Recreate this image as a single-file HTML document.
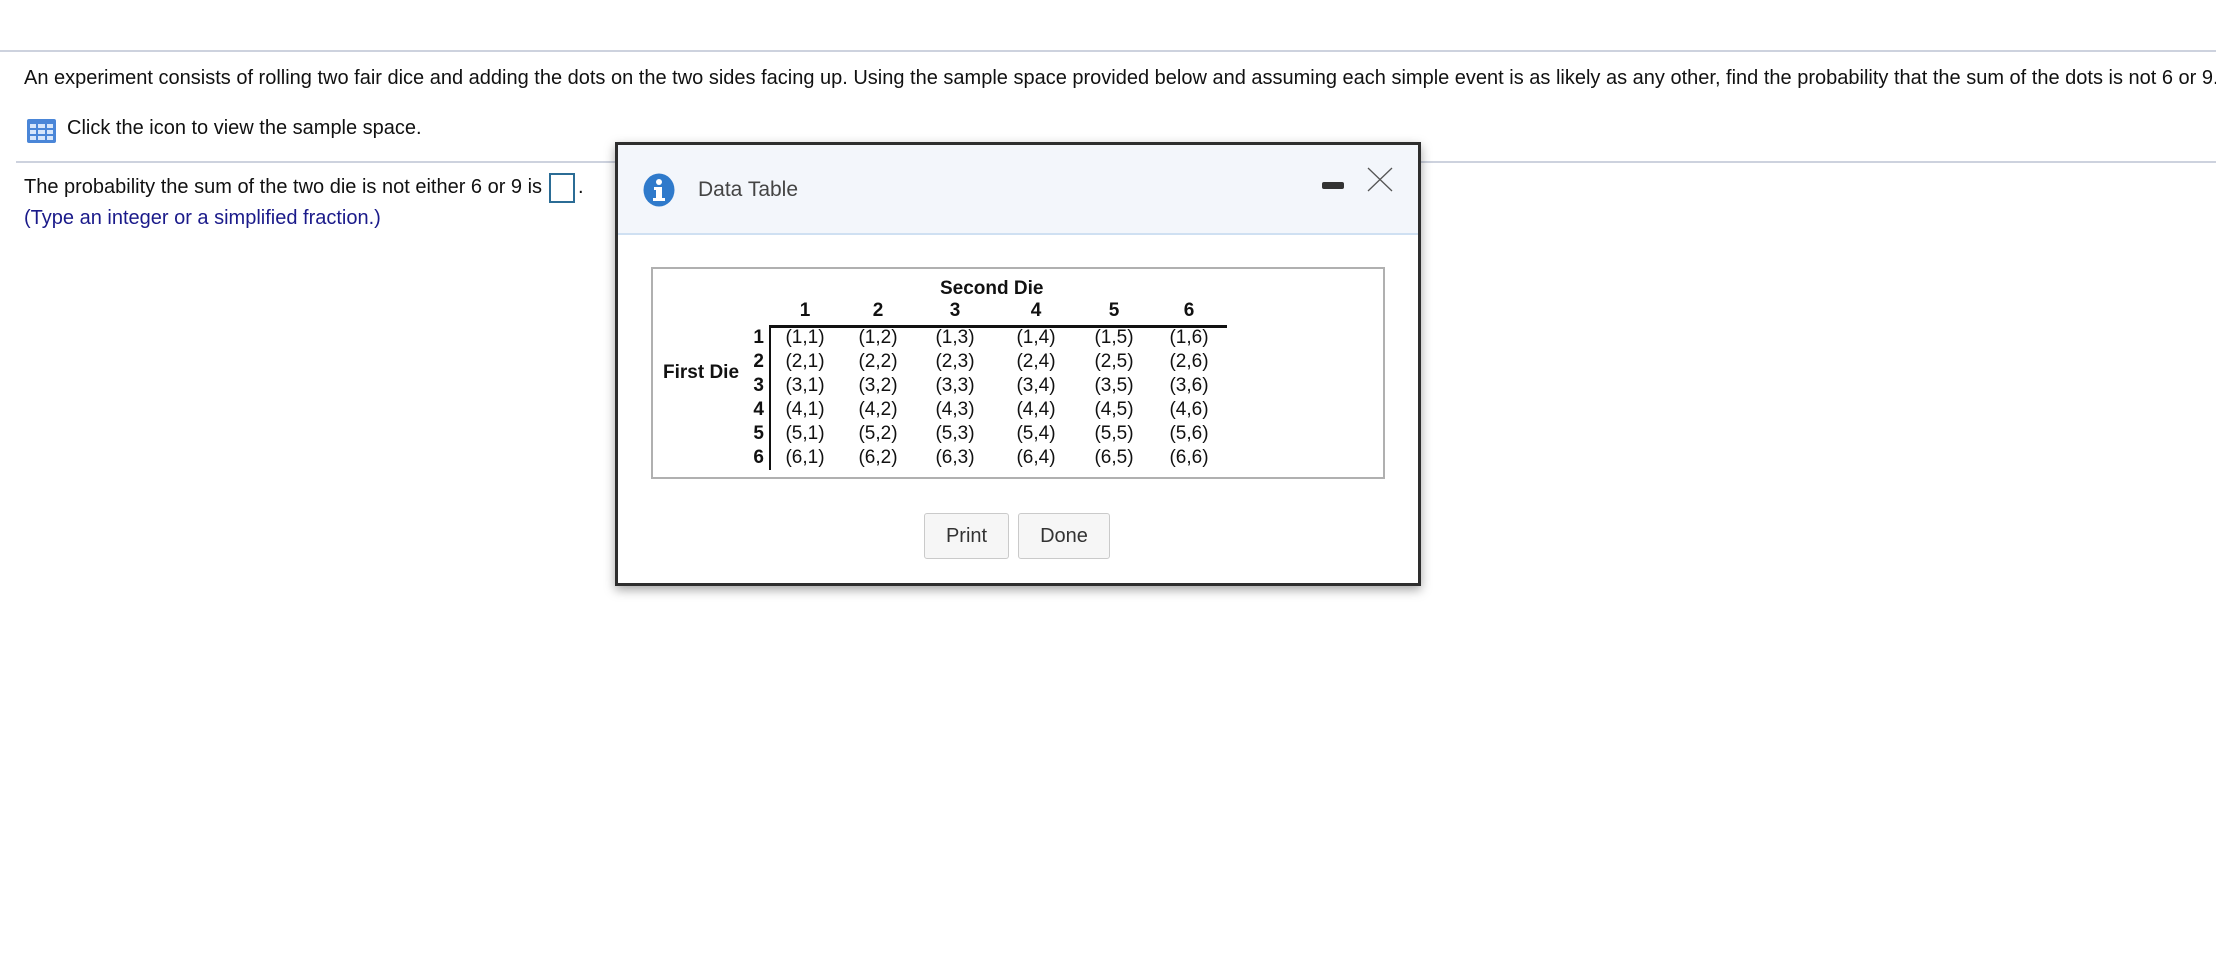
<!DOCTYPE html>
<html><head><meta charset="utf-8"><style>
*{margin:0;padding:0;box-sizing:border-box}
body{width:2216px;height:962px;background:#fff;position:relative;overflow:hidden;font-family:"Liberation Sans",Arial,sans-serif;color:#111}
.a{position:absolute;white-space:nowrap}
.hl{position:absolute;height:2px;background:#cdd2de}
.t{font-size:20px;line-height:24px}
.modal{position:absolute;left:615px;top:142px;width:806px;height:444px;border:3px solid #2e2e2e;background:#fff;box-shadow:0 4px 10px rgba(0,0,0,.35)}
.hdr{position:absolute;left:0;top:0;right:0;height:90px;background:#f3f6fb;border-bottom:2px solid #cfe0f2}
.cell{position:absolute;width:80px;text-align:center;font-size:19px;line-height:22px;transform:translateX(-40px)}
.b{font-weight:bold}
.btn{position:absolute;top:368px;height:46px;background:#f6f6f6;border:1px solid #cacaca;border-radius:3px;font-size:20px;line-height:44px;text-align:center;color:#333}
</style></head><body>
<div class="hl" style="left:0;top:50px;width:2216px"></div>
<div class="a t" style="left:24px;top:66px">An experiment consists of rolling two fair dice and adding the dots on the two sides facing up. Using the sample space provided below and assuming each simple event is as likely as any other, find the probability that the sum of the dots is not 6 or 9.</div>
<svg class="a" style="left:27px;top:119px" width="29" height="24" viewBox="0 0 29 24"><rect x="0" y="0" width="29" height="24" rx="2" fill="#4a86d8"/><g fill="#d6e6fb"><rect x="3" y="5" width="6" height="4"/><rect x="11" y="5" width="7" height="4"/><rect x="20" y="5" width="6" height="4"/><rect x="3" y="11" width="6" height="4"/><rect x="11" y="11" width="7" height="4"/><rect x="20" y="11" width="6" height="4"/><rect x="3" y="17" width="6" height="4"/><rect x="11" y="17" width="7" height="4"/><rect x="20" y="17" width="6" height="4"/></g></svg>
<div class="a t" style="left:67px;top:116px">Click the icon to view the sample space.</div>
<div class="hl" style="left:16px;top:161px;width:2200px"></div>
<div class="a t" style="left:24px;top:175px">The probability the sum of the two die is not either 6 or 9 is</div>
<div class="a" style="left:549px;top:173px;width:26px;height:30px;border:2px solid #2b6c95"></div>
<div class="a t" style="left:578px;top:175px">.</div>
<div class="a t" style="left:24px;top:206px;color:#1a1a8a">(Type an integer or a simplified fraction.)</div>

<div class="modal">
<div class="hdr"></div>
<svg class="a" style="left:25px;top:28px" width="32" height="34" viewBox="0 0 32 34"><ellipse cx="16" cy="17" rx="15.5" ry="16.5" fill="#2f7acb"/><circle cx="16" cy="9" r="3" fill="#fff"/><path d="M11 14h8v11h3v3H10v-3h3v-8h-2z" fill="#fff"/></svg>
<div class="a" style="left:80px;top:33px;font-size:21px;line-height:24px;color:#444">Data Table</div>
<div class="a" style="left:704px;top:37px;width:22px;height:7px;background:#333;border-radius:2px"></div>
<svg class="a" style="left:749px;top:22px" width="26" height="25" viewBox="0 0 26 25"><path d="M1 1L25 24M25 1L1 24" stroke="#555" stroke-width="1.3" fill="none"/></svg>

<div class="a" style="left:33px;top:122px;width:734px;height:212px;border:2px solid #b0b0b0"></div>
<div class="a b" style="left:322px;top:133px;width:100px;text-align:center;font-size:19px;line-height:22px">Second Die</div>
<div class="a" style="left:151px;top:180px;width:458px;height:3px;background:#111"></div>
<div class="a" style="left:151px;top:180px;width:2px;height:145px;background:#111"></div>
<div class="a b" style="left:45px;top:217px;font-size:19px;line-height:22px">First Die</div>

<div class="cell b" style="left:187px;top:155px">1</div><div class="cell b" style="left:260px;top:155px">2</div><div class="cell b" style="left:337px;top:155px">3</div><div class="cell b" style="left:418px;top:155px">4</div><div class="cell b" style="left:496px;top:155px">5</div><div class="cell b" style="left:571px;top:155px">6</div>

<div class="a b" style="left:130px;top:181px;width:16px;text-align:right;font-size:19px;line-height:24px">1<br>2<br>3<br>4<br>5<br>6</div>
<div class="cell" style="left:187px;top:181px;line-height:24px">(1,1)<br>(2,1)<br>(3,1)<br>(4,1)<br>(5,1)<br>(6,1)</div>
<div class="cell" style="left:260px;top:181px;line-height:24px">(1,2)<br>(2,2)<br>(3,2)<br>(4,2)<br>(5,2)<br>(6,2)</div>
<div class="cell" style="left:337px;top:181px;line-height:24px">(1,3)<br>(2,3)<br>(3,3)<br>(4,3)<br>(5,3)<br>(6,3)</div>
<div class="cell" style="left:418px;top:181px;line-height:24px">(1,4)<br>(2,4)<br>(3,4)<br>(4,4)<br>(5,4)<br>(6,4)</div>
<div class="cell" style="left:496px;top:181px;line-height:24px">(1,5)<br>(2,5)<br>(3,5)<br>(4,5)<br>(5,5)<br>(6,5)</div>
<div class="cell" style="left:571px;top:181px;line-height:24px">(1,6)<br>(2,6)<br>(3,6)<br>(4,6)<br>(5,6)<br>(6,6)</div>

<div class="btn" style="left:306px;width:85px">Print</div>
<div class="btn" style="left:400px;width:92px">Done</div>
</div>
</body></html>
